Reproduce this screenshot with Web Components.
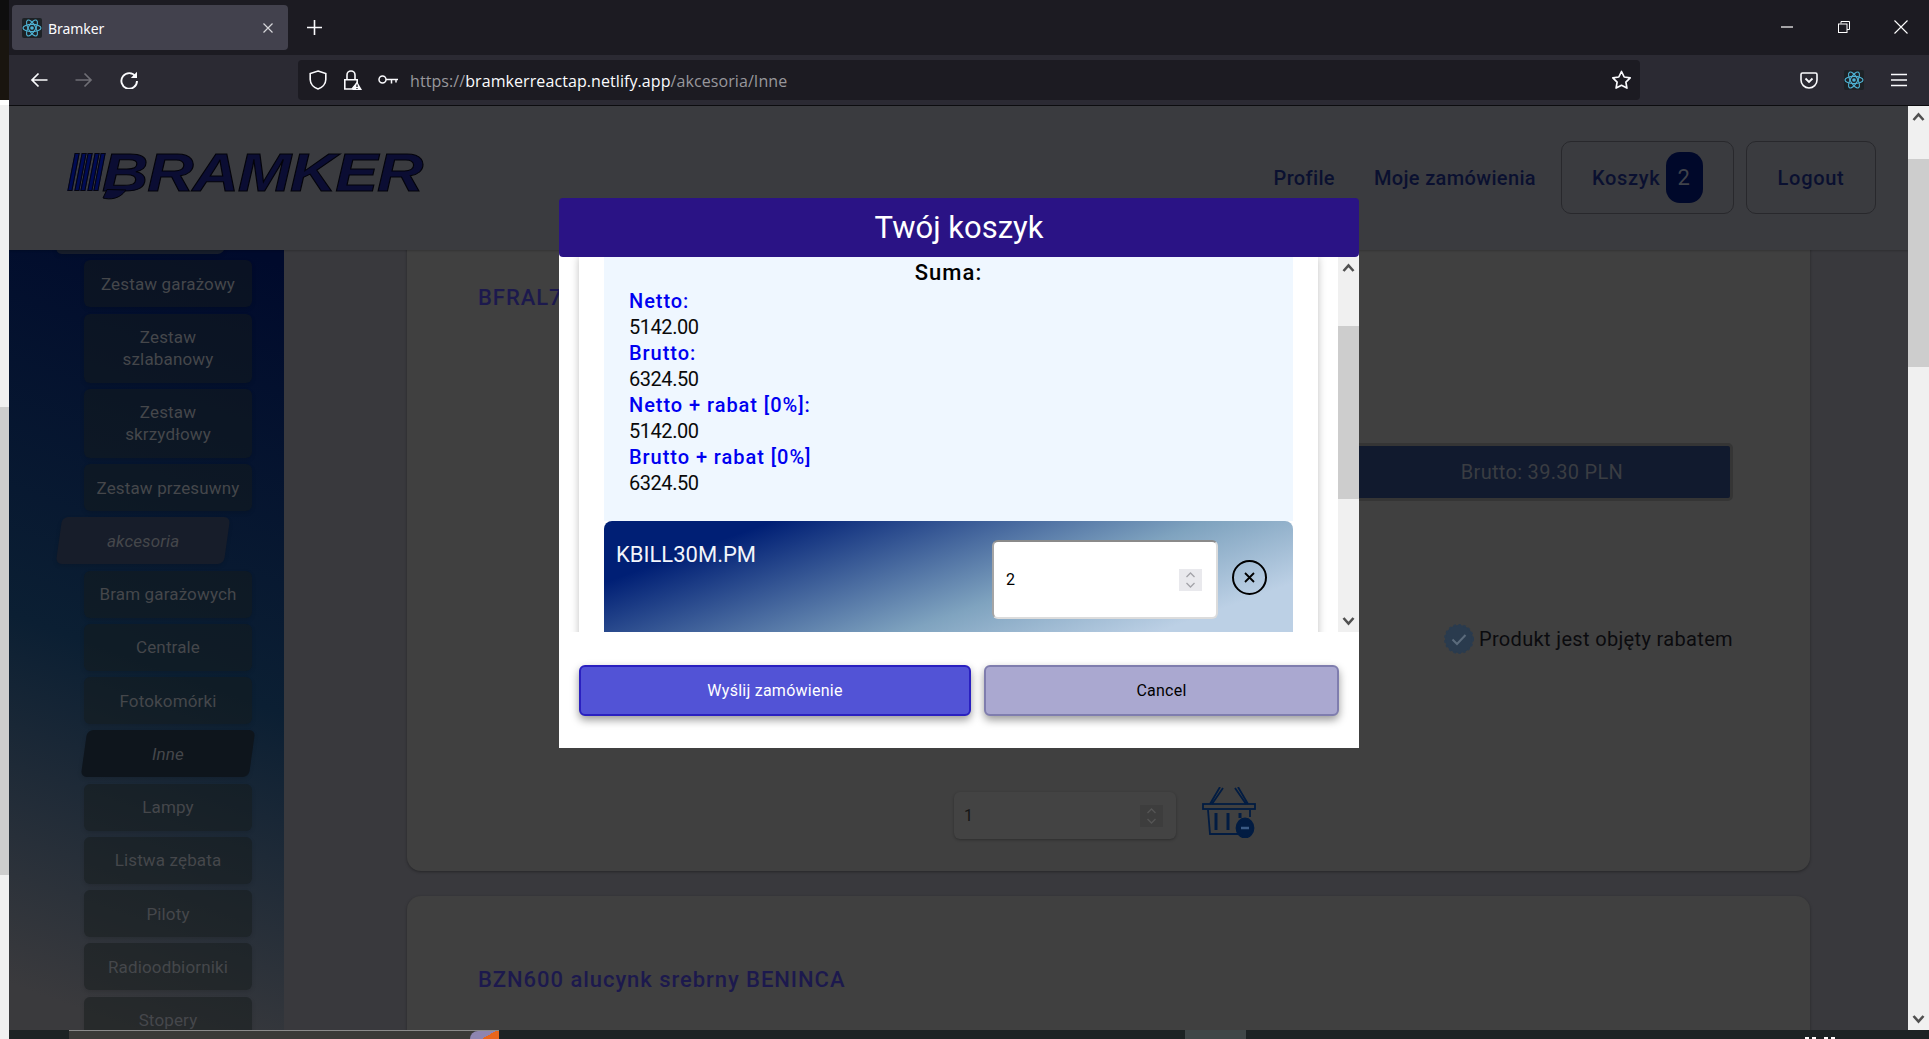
<!DOCTYPE html>
<html lang="pl">
<head>
<meta charset="utf-8">
<title>Bramker</title>
<style>
  html, body { margin: 0; height: 100%; overflow: hidden; background: #1c1b22; }
  body { display: flex; font-family: Roboto, "Liberation Sans", sans-serif; }
</style>
</head>
<body>
<back-window></back-window>
<browser-window>
  <tab-strip></tab-strip>
  <nav-bar></nav-bar>
  <page-viewport>
    <site-header></site-header>
    <page-main>
      <side-nav slot="nav">
        <side-item kind="open" empty style="min-height:47px"></side-item>
        <side-item>Zestaw garażowy</side-item>
        <side-item>Zestaw<br>szlabanowy</side-item>
        <side-item>Zestaw<br>skrzydłowy</side-item>
        <side-item>Zestaw przesuwny</side-item>
        <side-item kind="open">akcesoria</side-item>
        <side-item>Bram garażowych</side-item>
        <side-item>Centrale</side-item>
        <side-item>Fotokomórki</side-item>
        <side-item kind="current">Inne</side-item>
        <side-item>Lampy</side-item>
        <side-item>Listwa zębata</side-item>
        <side-item>Piloty</side-item>
        <side-item>Radioodbiorniki</side-item>
        <side-item>Stopery</side-item>
      </side-nav>
      <product-card slot="cards" full price="Brutto: 39.30 PLN">BFRAL7</product-card>
      <product-card slot="cards">BZN600 alucynk srebrny BENINCA</product-card>
    </page-main>
    <cart-modal slot="modal"></cart-modal>
  </page-viewport>
  <task-bar></task-bar>
</browser-window>

<script>
// every element is just a template in an open shadow root
function defineEl(name, html) {
  const template = document.createElement("template");
  template.innerHTML = html;
  class El extends HTMLElement {
    connectedCallback() {
      if (this.shadowRoot) return;
      this.attachShadow({ mode: "open" }).append(template.content.cloneNode(true));
    }
  }
  customElements.define(name, El);
}

const reactIcon = (size) => `
  <svg width="${size}" height="${size}" viewBox="0 0 20 20" style="display:block;background:#1d2226;border-radius:2px">
    <g fill="none" stroke="#4fb3d4" stroke-width="1.1">
      <ellipse cx="10" cy="10" rx="9" ry="3.6"/>
      <ellipse cx="10" cy="10" rx="9" ry="3.6" transform="rotate(60 10 10)"/>
      <ellipse cx="10" cy="10" rx="9" ry="3.6" transform="rotate(120 10 10)"/>
    </g>
    <circle cx="10" cy="10" r="1.8" fill="#4fb3d4"/>
  </svg>`;

const spinner = `
  <svg width="23" height="22" viewBox="0 0 23 22" style="display:block;background:var(--spin-bg,#e9e9ed)">
    <path d="M7.500 8 11.500 4l4 4M7.500 14l4 4 4-4" fill="none" stroke="var(--spin-fg,#a3a3a8)" stroke-width="1.300"/>
  </svg>`;

const arrowUp = `<svg width="13" height="9" viewBox="0 0 13 9" style="display:block"><path d="M1.500 8 6.500 2.500 11.500 8" fill="none" stroke="#505050" stroke-width="2.600"/></svg>`;
const arrowDown = `<svg width="13" height="9" viewBox="0 0 13 9" style="display:block"><path d="M1.500 1 6.500 6.500 11.500 1" fill="none" stroke="#505050" stroke-width="2.600"/></svg>`;

defineEl("back-window", `
  <style>
    :host { display: flex; flex-direction: column; width: 9px; flex: none; height: 100%; overflow: hidden; }
    .a { height: 30px; background: #0e0e0e; }
    .b { height: 70px; background: #19150f; }
    .c { height: 5px; background: #fff; }
    .d { height: 302px; background: #f0f0f0; }
    .e { height: 468px; background: #cdcdcd; }
    .f { flex: 1; background: #f0f0f0; }
  </style>
  <div class="a"></div><div class="b"></div><div class="c"></div>
  <div class="d"></div><div class="e"></div><div class="f"></div>`);

defineEl("browser-window", `
  <style>
    :host { display: flex; flex-direction: column; flex: 1; min-width: 0; height: 100%; }
  </style>
  <slot></slot>`);

defineEl("tab-strip", `
  <style>
    :host { display: flex; align-items: flex-start; height: 55px; flex: none; background: #1c1b22; color: #fbfbfe;
      font: 14px "Noto Sans", "Open Sans", sans-serif; }
    .tab { display: flex; align-items: center; box-sizing: border-box; width: 276px; height: 45px; margin: 5px 0 0 3px;
      padding: 0 15px 0 10px; background: #42414d; border-radius: 4px; }
    .label { margin-left: 6px; flex: 1; padding-top: 1px; letter-spacing: -.05px; }
    .plus { margin: 20px 0 0 19px; }
    .win { display: flex; margin-left: auto; }
    .win svg { display: block; }
  </style>
  <div class="tab">
    ${reactIcon(20)}
    <span class="label">Bramker</span>
    <svg width="10" height="10" viewBox="0 0 10 10"><path d="M.5.5l9 9M9.5.5l-9 9" stroke="#d6d6da" stroke-width="1.2"/></svg>
  </div>
  <svg class="plus" width="15" height="15" viewBox="0 0 15 15"><path d="M7.500 0v15M0 7.500h15" stroke="#fbfbfe" stroke-width="1.600"/></svg>
  <div class="win">
    <svg style="margin:26px 0 0 0" width="12" height="2" viewBox="0 0 12 2"><path d="M0 1h12" stroke="#fff" stroke-width="1.2"/></svg>
    <svg style="margin:21px 0 0 45px" width="12" height="12" viewBox="0 0 12 12"><path d="M3 2.500V.5h8.500v8H9" fill="none" stroke="#fff"/><rect x=".5" y="3" width="8.500" height="8.500" fill="none" stroke="#fff"/></svg>
    <svg style="margin:20px 21px 0 44px" width="14" height="14" viewBox="0 0 14 14"><path d="M.5.5l13 13M13.500.5l-13 13" stroke="#fff" stroke-width="1.100"/></svg>
  </div>`);

defineEl("nav-bar", `
  <style>
    :host { display: flex; align-items: flex-start; box-sizing: border-box; height: 51px; flex: none; background: #2b2a33;
      border-bottom: 1px solid #0c0c0f; }
    svg { display: block; flex: none; }
    .btns { display: flex; gap: 27px; margin: 16px 0 0 21px; width: 268px; }
    .url { display: flex; align-items: center; box-sizing: border-box; width: 1342px; height: 40px; margin-top: 5px;
      background: #1c1b22; border-radius: 4px; padding: 0 8px 0 11px; }
    .text { margin-left: 12px; flex: 1; padding-top: 2px; font: 16px "Open Sans", "Noto Sans", sans-serif; letter-spacing: .08px; color: #98979c; white-space: nowrap; }
    .text b { font-weight: 400; color: #fbfbfe; }
    .right { display: flex; align-items: center; height: 40px; margin-top: 5px; margin-left: 160px; }
  </style>
  <div class="btns">
    <svg width="18" height="18" viewBox="0 0 18 18"><path d="M17.500 9H2M8.500 2.500 2 9l6.500 6.500" fill="none" stroke="#fbfbfe" stroke-width="1.700"/></svg>
    <svg width="18" height="18" viewBox="0 0 18 18"><path d="M.5 9H16M9.500 2.500 16 9l-6.500 6.500" fill="none" stroke="#6f6e75" stroke-width="1.700"/></svg>
    <svg width="18" height="18" viewBox="0 0 18 18"><path d="M15.600 5.500A7.800 7.800 0 1 0 17 10" fill="none" stroke="#fbfbfe" stroke-width="1.900"/><path d="M17 .8V7h-6.200z" fill="#fbfbfe"/></svg>
  </div>
  <div class="url">
    <svg width="18" height="20" viewBox="0 0 18 20"><path d="M9 1 16.800 3.600V9.500C16.800 14 13 17.600 9 19 5 17.600 1.200 14 1.200 9.500V3.600Z" fill="none" stroke="#fbfbfe" stroke-width="1.600"/></svg>
    <svg style="margin-left:15px" width="20" height="20" viewBox="0 0 20 20"><path d="M5 9V5a4 4 0 0 1 8 0v4" fill="none" stroke="#fbfbfe" stroke-width="1.600"/><path d="M2.800 9.800h12.400v3L10 19H2.800z" fill="none" stroke="#fbfbfe" stroke-width="1.600"/><path d="M15 11.500 20 20H10z" fill="#fbfbfe"/><path d="M15 14.500v2.600M15 18v1" stroke="#1c1b22" stroke-width="1.300"/></svg>
    <svg style="margin-left:16px" width="20" height="10" viewBox="0 0 20 10"><circle cx="4.500" cy="4.500" r="3.500" fill="none" stroke="#fbfbfe" stroke-width="1.500"/><path d="M8 4.500h12M13.500 4.500v4M18 4.500v3" fill="none" stroke="#fbfbfe" stroke-width="1.500"/></svg>
    <span class="text">https://<b>bramkerreactap.netlify.app</b>/akcesoria/Inne</span>
    <svg width="21" height="20" viewBox="0 0 21 20"><path d="M10.500 1.500 13.200 7l6 .9-4.300 4.200 1 6-5.400-2.800L5.100 18.100l1-6L1.800 7.900l6-.9z" fill="none" stroke="#fbfbfe" stroke-width="1.700" stroke-linejoin="round"/></svg>
  </div>
  <div class="right">
    <svg width="18" height="17" viewBox="0 0 18 17"><path d="M2.500 1h13A1.500 1.500 0 0 1 17 2.500V8A8 8 0 0 1 1 8V2.500A1.500 1.500 0 0 1 2.500 1z" fill="none" stroke="#fbfbfe" stroke-width="1.600"/><path d="M5.500 6.500 9 10l3.500-3.500" fill="none" stroke="#fbfbfe" stroke-width="1.800"/></svg>
    <span style="margin-left:26px">${reactIcon(20)}</span>
    <svg style="margin-left:27px" width="16" height="14" viewBox="0 0 16 14"><path d="M0 1.500h16M0 7h16M0 12.500h16" stroke="#fbfbfe" stroke-width="1.700"/></svg>
  </div>`);

defineEl("page-viewport", `
  <style>
    :host { display: flex; flex: 1; min-height: 0; position: relative; }
    .page { display: flex; flex-direction: column; flex: 1; min-width: 0; overflow: hidden; position: relative; }
  </style>
  <div class="page">
    <slot></slot>
    <slot name="modal"></slot>
  </div>
  <side-scroll style="--before:53px;--thumb:208px;width:21px"></side-scroll>`);

defineEl("side-scroll", `
  <style>
    :host { display: flex; flex-direction: column; flex: none; background: #f0f0f0; }
    .arrow { height: 21px; flex: none; display: flex; align-items: center; justify-content: center; }
    .gap { height: calc(var(--before) - 21px); flex: none; }
    .thumb { height: var(--thumb); flex: none; background: #cdcdcd; }
    .rest { flex: 1; }
  </style>
  <div class="arrow">${arrowUp}</div>
  <div class="gap"></div>
  <div class="thumb"></div>
  <div class="rest"></div>
  <div class="arrow">${arrowDown}</div>`);

defineEl("site-header", `
  <style>
    :host { display: flex; align-items: flex-start; box-sizing: border-box; height: 144px; flex: none; background: #3a3b3f;
      position: relative; z-index: 2; font-size: 20px; color: #0a1030; box-shadow: 0 1px 2px rgba(0,0,0,.2); }
    .logo { position: relative; display: flex; align-items: flex-start; margin: 47px 0 0 58px; width: 358px; height: 46px; }
    .stripes { display: flex; gap: 1.600px; transform: skewX(-11deg); margin-left: 4px; }
    .stripes i { display: block; width: 5px; height: 38px; background: #000b55; outline: 1px solid #05050f; outline-offset: -1px; }
    .word { font: italic 700 54px/38px "Liberation Sans", sans-serif; color: #0b0d33; -webkit-text-stroke: 1px #03030a;
      transform: scaleX(1.19); transform-origin: left top; letter-spacing: -1px; }
    .tail { position: absolute; left: 34px; top: 36px; }
    nav { display: flex; align-items: center; margin-left: auto; margin-top: 35px; padding-right: 32px; font-weight: 500; }
    .link { letter-spacing: .35px; margin-right: 39px; }
    .link + .link { margin-right: 25px; }
    .btn { display: flex; align-items: center; box-sizing: border-box; height: 73px; border: 1px solid #28282c; border-radius: 10px; letter-spacing: .7px; }
    .cart { width: 173px; padding-left: 30px; margin-right: 12px; }
    .out { width: 130px; justify-content: center; }
    .badge { display: flex; align-items: center; justify-content: center; width: 37px; height: 51px; margin-left: 5px; background: #00082a;
      border-radius: 14px; color: #40434a; font-size: 22px; font-weight: 400; }
  </style>
  <div class="logo">
    <div class="stripes"><i></i><i></i><i></i><i></i><i></i></div>
    <div class="word">BRAMKER</div>
    <svg class="tail" width="26" height="11" viewBox="0 0 26 11"><path d="M6 .5 2 9C9 11 19 10 25 1Z" fill="#0b0d33" stroke="#03030a"/></svg>
  </div>
  <nav>
    <span class="link">Profile</span>
    <span class="link">Moje zamówienia</span>
    <div class="btn cart">Koszyk<span class="badge">2</span></div>
    <div class="btn out">Logout</div>
  </nav>`);

defineEl("page-main", `
  <style>
    :host { display: flex; flex: 1; min-height: 0; overflow: hidden; background: #39393d; }
    .cards { display: flex; flex-direction: column; gap: 25px; flex: 1; min-width: 0; margin-top: -36px; padding: 0 98px 0 123px; }
  </style>
  <slot name="nav"></slot>
  <div class="cards"><slot name="cards"></slot></div>`);

defineEl("side-nav", `
  <style>
    :host { display: flex; flex-direction: column; gap: 6.250px; flex: none; box-sizing: border-box; width: 275px; padding: 0 0 0 75px;
      margin-top: -43px; height: 874px;
      background: linear-gradient(200deg, #000a2c 6%, #0b1f33 52%, #3a3a3d 90%); }
  </style>
  <slot></slot>`);

defineEl("side-item", `
  <style>
    :host { display: flex; align-items: center; justify-content: center; box-sizing: border-box; flex: none; width: 168px;
      padding: 12.500px 0; text-align: center; line-height: 22px; font-size: 17px; letter-spacing: .15px; color: #45474b;
      background: rgba(20,25,25,.5); border-radius: 6px; box-shadow: 0 2px 4px rgba(0,0,0,.12); }
    :host([kind="open"]) { margin-left: -25px; transform: skewX(-8deg); background: #171d2a; font-style: italic; }
    :host([kind="current"]) { transform: skewX(-8deg); background: #0e151c; font-style: italic; }
    :host([kind="open"]) span, :host([kind="current"]) span { transform: skewX(8deg); }
    span { display: block; }
  </style>
  <span><slot></slot></span>`);

defineEl("num-input", `
  <style>
    :host { display: flex; align-items: center; box-sizing: border-box; background: #fff; border-radius: 6px; }
    .v { flex: 1; }
  </style>
  <span class="v"><slot></slot></span>
  ${spinner}`);

defineEl("product-card", `
  <style>
    :host { display: flex; flex-direction: column; flex: none; box-sizing: border-box; min-height: 400px; padding: 70px 77px 32px 71px; background: #404040;
      border-radius: 14px; box-shadow: 0 1px 3px rgba(0,0,0,.35); }
    .title { font-size: 22px; line-height: 28px; font-weight: 500; color: #1c194d; letter-spacing: .95px; white-space: nowrap; }
    .price, .check, .qty { display: none; }
    :host([full]) .price { display: flex; align-items: center; justify-content: center; box-sizing: border-box; align-self: flex-end; width: 382px; height: 58px;
      margin-top: 131px; background: #111a2e; border: 3px solid #353535; border-radius: 5px; color: #3a3d42; font-size: 20px; letter-spacing: .3px; }
    :host([full]) .check { display: flex; align-items: center; align-self: flex-end; margin-top: 123px; gap: 5px; font-size: 20px; letter-spacing: .34px; color: #0b0b0e; }
    :host([full]) .qty { display: flex; align-items: flex-start; margin: 133px 0 0 476px; }
    num-input { width: 222px; height: 47px; margin-top: 5px; padding: 0 13px 0 10px; background: #434343; box-shadow: 0 1px 3px rgba(0,0,0,.3);
      font-size: 16px; color: #151515; --spin-bg: #3d3d3d; --spin-fg: #555; }
    .basket { display: block; margin-left: 26px; }
  </style>
  <div class="title"><slot></slot></div>
  <div class="price"></div>
  <div class="check">
    <svg width="30" height="30" viewBox="0 0 30 30"><circle cx="15" cy="15" r="14" fill="#2a3b4e"/><circle cx="15" cy="15" r="14" fill="none" stroke="#2a3b4e" stroke-width="2" stroke-dasharray="2.500 2.500"/><path d="M8.500 15.500 13 20l8.500-9" fill="none" stroke="#5b6b7c" stroke-width="2"/></svg>
    <span>Produkt jest objęty rabatem</span>
  </div>
  <div class="qty">
    <num-input>1</num-input>
    <svg class="basket" width="54" height="51" viewBox="0 0 54 51" fill="none" stroke="#021c42" stroke-width="1.800">
      <path d="M21 1 10 17M18 0 8 17M33 1 44 17M36 0 46 17"/>
      <rect x="1" y="17" width="52" height="5"/>
      <path d="M6 23 8 47H36M48 23V30"/>
      <path d="M14 26V43M26 26V43M38 26V31" stroke-width="3"/>
      <ellipse cx="43" cy="41" rx="8.500" ry="9.500" fill="#021c42"/>
      <path d="M39 41h8" stroke="#3a5a85" stroke-width="2.500"/>
    </svg>
  </div>`);
customElements.whenDefined("product-card").then(() => {
  document.querySelectorAll("product-card[price]").forEach(card => {
    card.shadowRoot.querySelector(".price").textContent = card.getAttribute("price");
  });
});

defineEl("total-line", `
  <style>
    :host { display: block; line-height: 26px; font-size: 20px; letter-spacing: -.45px; color: #0a0a0a; }
    :host([label]) { color: #0000f0; font-weight: 500; letter-spacing: .95px; }
  </style>
  <slot></slot>`);

defineEl("cart-modal", `
  <style>
    :host { position: absolute; left: 550px; top: 92px; z-index: 5; display: flex; flex-direction: column; width: 800px; height: 550px;
      background: linear-gradient(transparent 10px, #fff 10px); }
    header { display: flex; align-items: center; justify-content: center; height: 59px; flex: none; background: #2a1385; border-radius: 4px;
      color: #fff; font-size: 31px; line-height: 59px; }
    .scroll { display: flex; height: 375px; flex: none; overflow: hidden; }
    .inner { flex: 1; min-width: 0; overflow: hidden; padding: 0 20px; }
    .sheet { box-sizing: border-box; height: 500px; padding: 0 25px; background: #fff; box-shadow: 0 0 8px rgba(0,0,0,.25); }
    .sum { box-sizing: border-box; height: 264px; padding: 3px 25px 0; background: #eff7ff; }
    h3 { margin: 0 0 2px; font-size: 22px; line-height: 26px; font-weight: 500; letter-spacing: 1px; color: #000; text-align: center; }
    .item { display: flex; align-items: flex-start; box-sizing: border-box; height: 190px; padding: 19px 26px 0 12px;
      border-radius: 8px 8px 0 0; background: linear-gradient(160deg, #001f75 14%, #7fa3bf 50%, #bcd0e5 71%); }
    .name { flex: 1; color: #f2f5fb; font-size: 22px; line-height: 30px; }
    num-input { width: 226px; height: 79px; padding: 0 14px 0 12px; border-top: 2px solid #8a8a8a; border-left: 2px solid #a5a5a5; border-right: 2px solid #dcdcdc; border-bottom: 2px solid #dcdcdc;
      font-size: 16px; color: #000; margin-right: 14px; }
    .rm { margin-top: 20px; display: block; flex: none; }
    footer { display: flex; gap: 13px; padding: 33px 20px 0; }
    button { box-sizing: border-box; height: 51px; border-radius: 6px; font: 16px Roboto, sans-serif; letter-spacing: .25px; box-shadow: 0 4px 8px rgba(0,0,0,.4); padding: 0; }
    .send { width: 392px; background: #5253d6; border: 2px solid #2a20c0; color: #fff; }
    .cancel { width: 355px; background: #aaa8d0; border: 2px solid #7f7dae; color: #000; }
  </style>
  <header>Twój koszyk</header>
  <div class="scroll">
    <div class="inner">
      <div class="sheet">
        <div class="sum">
          <h3>Suma:</h3>
          <total-line label>Netto:</total-line>
          <total-line>5142.00</total-line>
          <total-line label>Brutto:</total-line>
          <total-line>6324.50</total-line>
          <total-line label>Netto + rabat [0%]:</total-line>
          <total-line>5142.00</total-line>
          <total-line label>Brutto + rabat [0%]</total-line>
          <total-line>6324.50</total-line>
        </div>
        <div class="item">
          <div class="name">KBILL30M.PM</div>
          <num-input>2</num-input>
          <svg class="rm" width="35" height="35" viewBox="0 0 35 35" fill="none" stroke="#000"><circle cx="17.500" cy="17.500" r="16.500" stroke-width="2"/><path d="M13 13l9 9M22 13l-9 9" stroke-width="1.800"/></svg>
        </div>
      </div>
    </div>
    <side-scroll style="--before:69px;--thumb:173px;width:21px"></side-scroll>
  </div>
  <footer>
    <button class="send">Wyślij zamówienie</button>
    <button class="cancel">Cancel</button>
  </footer>`);

defineEl("task-bar", `
  <style>
    :host { display: flex; height: 9px; flex: none; overflow: hidden; background: #1c2324; }
    .app { display: flex; justify-content: flex-end; box-sizing: border-box; width: 430px; margin-left: 60px; background: #3a3a38; border-top: 1px solid #8a8a8a; }
    .blob { width: 29px; background: linear-gradient(150deg, #8d85b0 60%, #e8661c 60%); border-radius: 20px 0 0 0; }
    .active { width: 61px; margin-left: 686px; background: #3f4748; }
    .clock { display: flex; gap: 3px; margin: 7px 0 0 559px; }
    .clock i { display: block; width: 4px; height: 2px; background: #fff; }
    .clock i:nth-child(3) { margin-left: 5px; }
  </style>
  <div class="app"><div class="blob"></div></div>
  <div class="active"></div>
  <div class="clock"><i></i><i></i><i></i><i></i></div>`);
</script>
</body>
</html>
